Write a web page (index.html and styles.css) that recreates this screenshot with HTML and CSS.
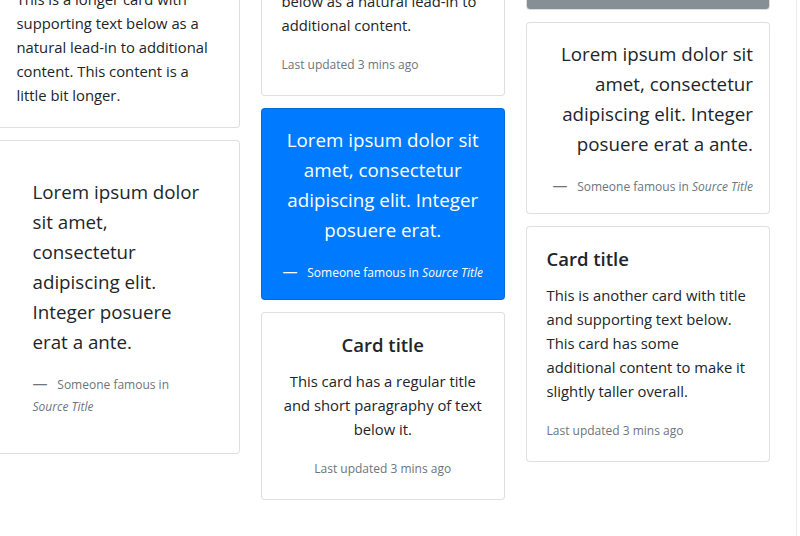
FILE: index.html
```html
<!DOCTYPE html>
<html lang="en">
<head>
<meta charset="utf-8">
<title>Cards</title>
<link rel="stylesheet" href="styles.css">
</head>
<body>
<div class="frame">
  <div class="columns">
    <div class="col col-1">
      <div class="card">
        <div class="card-body">
          <p class="card-text last">This is a longer card with supporting text below as a natural lead-in to additional content. This content is a little bit longer.</p>
        </div>
      </div>
      <div class="card p-3">
        <blockquote class="blockquote card-body">
          <p>Lorem ipsum dolor sit amet, consectetur adipiscing elit. Integer posuere erat a ante.</p>
          <footer class="blockquote-footer"> <small>Someone famous in <cite title="Source Title">Source Title</cite></small></footer>
        </blockquote>
      </div>
    </div>

    <div class="col col-2">
      <div class="card">
        <div class="card-body">
          <p class="card-text">This card has supporting text below as a natural lead-in to additional content.</p>
          <p class="card-text meta last"><small class="text-muted">Last updated 3 mins ago</small></p>
        </div>
      </div>
      <div class="card card-primary text-center p-3">
        <blockquote class="blockquote">
          <p>Lorem ipsum dolor sit amet, consectetur adipiscing elit. Integer posuere erat.</p>
          <footer class="blockquote-footer footer-white"> <small>Someone famous in <cite title="Source Title">Source Title</cite></small></footer>
        </blockquote>
      </div>
      <div class="card text-center">
        <div class="card-body">
          <h5 class="card-title">Card title</h5>
          <p class="card-text">This card has a regular title and short paragraphy of text below it.</p>
          <p class="card-text meta last"><small class="text-muted">Last updated 3 mins ago</small></p>
        </div>
      </div>
    </div>

    <div class="col col-3">
      <div class="card card-image">
        <div class="card-img"></div>
      </div>
      <div class="card p-3 text-right">
        <blockquote class="blockquote">
          <p>Lorem ipsum dolor sit amet, consectetur adipiscing elit. Integer posuere erat a ante.</p>
          <footer class="blockquote-footer"> <small>Someone famous in <cite title="Source Title">Source Title</cite></small></footer>
        </blockquote>
      </div>
      <div class="card">
        <div class="card-body">
          <h5 class="card-title">Card title</h5>
          <p class="card-text">This is another card with title and supporting text below. This card has some additional content to make it slightly taller overall.</p>
          <p class="card-text meta last"><small class="text-muted">Last updated 3 mins ago</small></p>
        </div>
      </div>
    </div>
  </div>
</div>
</body>
</html>
```

FILE: styles.css
```css
* {
  box-sizing: border-box;
}

html,
body {
  margin: 0;
  padding: 0;
  background: #ffffff;
}

body {
  width: 800px;
  height: 536px;
  overflow: hidden;
  font-family: "Open Sans", "Noto Sans", sans-serif;
  font-size: 14.8px;
  line-height: 24px;
  color: #212529;
}

.frame {
  width: 797px;
  height: 536px;
  overflow: hidden;
  border-right: 1px solid #ededed;
}

.columns {
  display: flex;
  align-items: flex-start;
  gap: 20.5px;
  margin-left: -4.5px;
}

.col {
  flex: none;
  width: 244.5px;
  display: flex;
  flex-direction: column;
  gap: 12px;
}

.col-1 {
  margin-top: -34px;
}

.col-2 {
  margin-top: -56px;
}

.col-3 {
  margin-top: -152px;
}

.card {
  border: 1px solid rgba(0, 0, 0, 0.125);
  border-radius: 4px;
  background: #ffffff;
}

.card-body {
  padding: 20px;
}

.p-3 {
  padding: 16px;
}

.text-center {
  text-align: center;
}

.text-right {
  text-align: right;
}

.card-title {
  margin: 0 0 12px;
  font-size: 18.5px;
  line-height: 24px;
  font-weight: 600;
}

.card-text {
  margin: 0 0 16px;
}

.card-text.last {
  margin-bottom: 0;
}

.meta {
  line-height: 20px;
}

.meta small {
  font-size: 12px;
}

.text-muted {
  color: #6c757d;
}

.blockquote {
  margin: 0;
  font-size: 18.75px;
  line-height: 30px;
}

.blockquote p {
  margin: 0 0 16px;
}

.blockquote-footer {
  display: block;
  font-size: 15px;
  line-height: 21px;
  color: #6c757d;
}

.blockquote-footer::before {
  content: "\2014\00A0";
  letter-spacing: 1px;
}

.blockquote-footer small {
  font-size: 12px;
}

.blockquote-footer cite {
  font-style: italic;
}

.card-primary {
  background: #007bff;
  color: #ffffff;
}

.footer-white {
  color: #ffffff;
}

.card-image {
  overflow: hidden;
}

.card-img {
  height: 160px;
  background: #868e96;
}
```
